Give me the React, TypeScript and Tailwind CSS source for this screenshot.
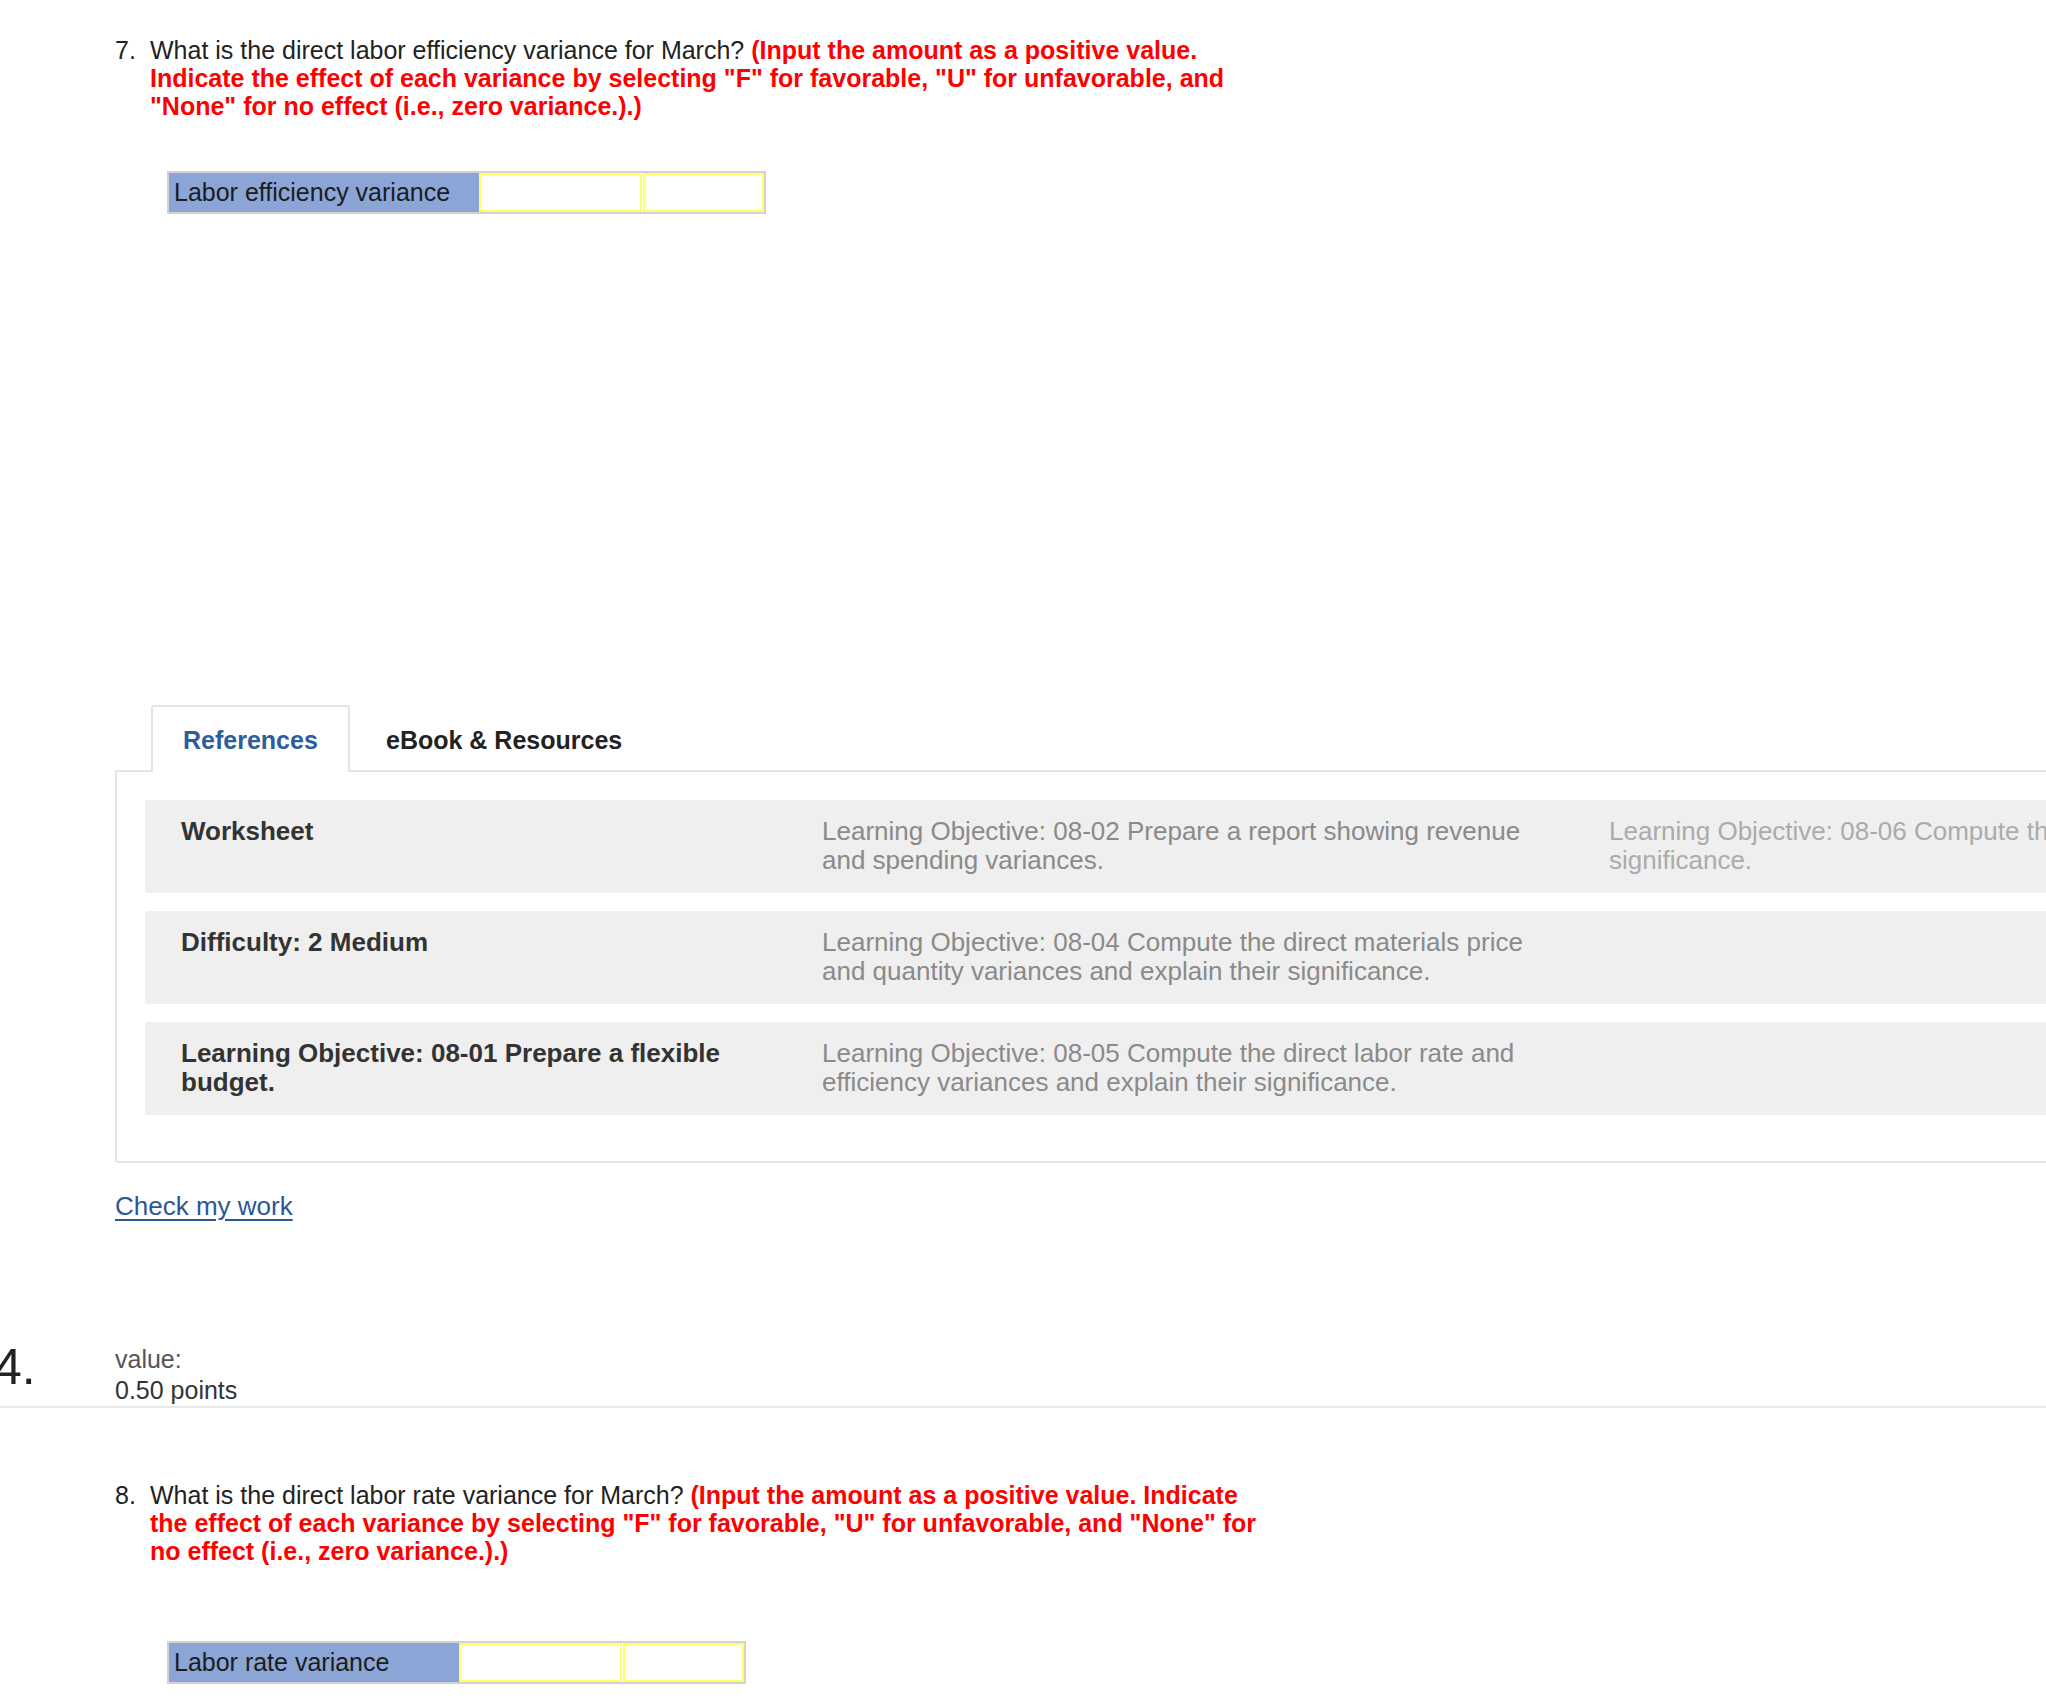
import React from 'react';

type Q = { num: string; ask: string; note: string; label: string; labelW: string };

const questions: Record<string, Q> = {
  q7: {
    num: '7.',
    ask: 'What is the direct labor efficiency variance for March?',
    note: '(Input the amount as a positive value. Indicate the effect of each variance by selecting "F" for favorable, "U" for unfavorable, and "None" for no effect (i.e., zero variance.).)',
    label: 'Labor efficiency variance',
    labelW: 'w-[310px]',
  },
  q8: {
    num: '8.',
    ask: 'What is the direct labor rate variance for March?',
    note: '(Input the amount as a positive value. Indicate the effect of each variance by selecting "F" for favorable, "U" for unfavorable, and "None" for no effect (i.e., zero variance.).)',
    label: 'Labor rate variance',
    labelW: 'w-[290px]',
  },
};

function Question({ q, gap }: { q: Q; gap: string }) {
  return (
    <div className="pl-[115px]">
      <div className="flex text-[25px] leading-[28px] text-[#222]">
        <div className="w-[35px] shrink-0">{q.num}</div>
        <p className="w-[1128px]">
          {q.ask} <span className="font-bold text-[#ff0000]">{q.note}</span>
        </p>
      </div>
      <div className={`${gap} ml-[52px] flex h-[43px] w-fit border-2 border-[#d2d2d2] bg-white`}>
        <div className={`${q.labelW} flex items-center bg-[#8aa5d6] pl-[5px] text-[25px] text-[#1c1c1c]`}>
          {q.label}
        </div>
        <div className="w-[163px] border-2 border-[#ffff66] bg-white" />
        <div className="ml-px w-[121px] border-2 border-[#ffff66] bg-white" />
      </div>
    </div>
  );
}

const rows = [
  {
    head: 'Worksheet',
    mid: 'Learning Objective: 08-02 Prepare a report showing revenue and spending variances.',
    right: true,
  },
  {
    head: 'Difficulty: 2 Medium',
    mid: 'Learning Objective: 08-04 Compute the direct materials price and quantity variances and explain their significance.',
    right: false,
  },
  {
    head: 'Learning Objective: 08-01 Prepare a flexible budget.',
    mid: 'Learning Objective: 08-05 Compute the direct labor rate and efficiency variances and explain their significance.',
    right: false,
  },
];

export default function App() {
  return (
    <div
      className="h-[1701px] w-[2046px] overflow-hidden bg-white pt-[36px]"
      style={{ fontFamily: '"Liberation Sans", Arial, Helvetica, sans-serif' }}
    >
      <Question q={questions.q7} gap="mt-[51px]" />

      {/* References tabs */}
      <div className="ml-[115px] mt-[491px] w-[2000px]">
        <div className="flex items-start pl-[36px]">
          <div className="relative z-10 -mb-[2px] flex h-[67px] w-[199px] items-center rounded-t-[3px] border-2 border-b-0 border-[#e4e4e4] bg-white pl-[30px] pt-[2px] text-[25px] font-bold text-[#2d5d9b]">
            References
          </div>
          <div className="flex h-[65px] items-center pl-[36px] pt-[6px] text-[25px] font-bold text-[#222]">
            eBook &amp; Resources
          </div>
        </div>
        <div className="flex flex-col gap-[18px] rounded-bl-[3px] border-2 border-[#e4e4e4] pb-[46px] pl-[28px] pt-[28px]">
          {rows.map((r) => (
            <div key={r.head} className="flex h-[93px] rounded-l-[3px] bg-[#efefef] pt-[17px] text-[26px] leading-[29px]">
              <div className="w-[677px] shrink-0 pl-[36px] pr-[90px] font-bold text-[#333]">{r.head}</div>
              <div className="w-[787px] shrink-0 pr-[67px] text-[#8a8a8a]">{r.mid}</div>
              {r.right && (
                <div className="whitespace-nowrap text-[#ababab]">
                  Learning Objective: 08-06 Compute the variable manufacturing overhead rate and efficiency variances and explain their
                  <br />
                  significance.
                </div>
              )}
            </div>
          ))}
        </div>
      </div>

      <a href="#" className="ml-[115px] mt-[29px] block w-fit text-[26px] leading-[29px] text-[#2b5797] underline decoration-2 underline-offset-[4px]">
        Check my work
      </a>

      {/* question 4 value */}
      <div className="mt-[123px] flex border-b-2 border-[#e8e8e8]">
        <div className="w-[115px] shrink-0">
          <div className="-ml-[6px] -mt-[2px] text-[50px] leading-[50px] text-[#222]">4.</div>
        </div>
        <div className="text-[25px] leading-[31px]">
          <div className="text-[#555]">value:</div>
          <div className="text-[#333]">0.50 points</div>
        </div>
      </div>

      <div className="mt-[73px]">
        <Question q={questions.q8} gap="mt-[76px]" />
      </div>
    </div>
  );
}
